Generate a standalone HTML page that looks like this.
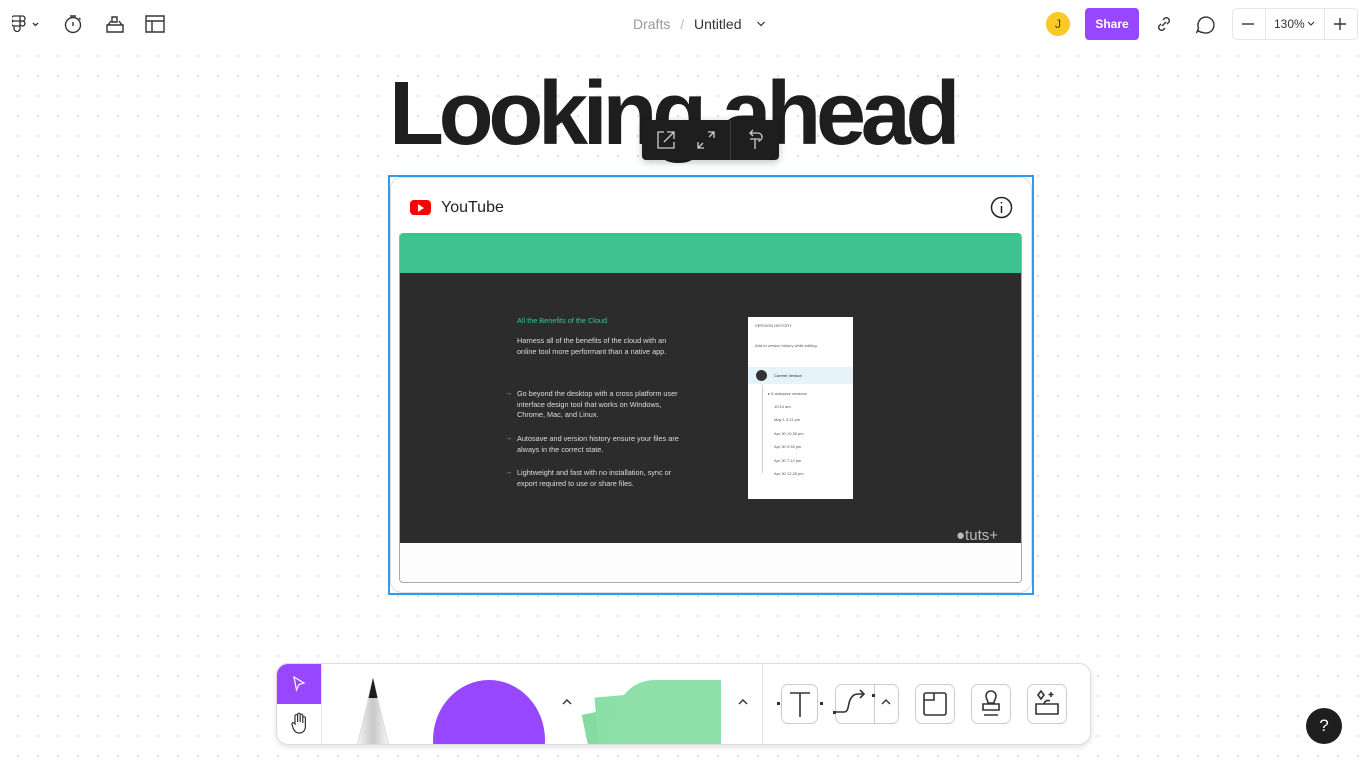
<!DOCTYPE html>
<html><head><meta charset="utf-8"><style>
*{margin:0;padding:0;box-sizing:border-box}
body{width:1366px;height:768px;overflow:hidden;position:relative;font-family:"Liberation Sans",sans-serif;background:#fff;
background-image:radial-gradient(circle,#dadada 0.9px,transparent 1.2px);background-size:20px 20px;background-position:8px 6px}
.top{position:absolute;left:0;top:0;width:1366px;height:48px;background:#fff}
.abs{position:absolute}
svg{display:block}
</style></head><body>
<div class="top"></div>
<svg class="abs" style="left:12px;top:15px" width="30" height="18" viewBox="0 0 30 18" fill="none" stroke="#333" stroke-width="1.3">
<path d="M2 1h6v5H2a2.5 2.5 0 010-5zM8 1h2.5a2.5 2.5 0 010 5H8zM2 6h6v5H2a2.5 2.5 0 010-5zM8 8.5a2.5 2.5 0 105 0a2.5 2.5 0 10-5 0zM2 11h6v2.5a2.5 2.5 0 11-6-0z"/>
<path d="M21 8l2.5 2.5L26 8"/></svg>
<svg class="abs" style="left:63px;top:14px" width="20" height="20" viewBox="0 0 20 20" fill="none" stroke="#333" stroke-width="1.4"><circle cx="10" cy="11" r="7.5"/><path d="M7 2h6M10 8v4M16 4l1.5 1.5"/></svg>
<svg class="abs" style="left:105px;top:14px" width="20" height="20" viewBox="0 0 20 20" fill="none" stroke="#333" stroke-width="1.4"><path d="M7 3h5v5H7zM3 11l3-4M17 11l-3-4M2 11h16v7H2z"/></svg>
<svg class="abs" style="left:145px;top:15px" width="20" height="18" viewBox="0 0 20 18" fill="none" stroke="#333" stroke-width="1.4"><path d="M1 1h18v16H1zM1 6h18M7 6v11"/></svg>
<div class="abs" style="left:633px;top:16px;font-size:14px;color:#999">Drafts <span style="margin:0 6px;color:#bbb">/</span> <span style="color:#333">Untitled</span></div>
<svg class="abs" style="left:756px;top:20px" width="10" height="8" viewBox="0 0 10 8" fill="none" stroke="#333" stroke-width="1.2"><path d="M1.5 2l3.5 3.5L8.5 2"/></svg>
<div class="abs" style="left:1046px;top:12px;width:24px;height:24px;border-radius:50%;background:#fbc926;font-size:12px;text-align:center;line-height:24px;color:#333">J</div>
<div class="abs" style="left:1085px;top:8px;width:54px;height:32px;border-radius:4px;background:#9747ff;color:#fff;font-size:12px;font-weight:bold;text-align:center;line-height:32px">Share</div>
<svg class="abs" style="left:1154px;top:14px" width="20" height="20" viewBox="0 0 20 20" fill="none" stroke="#333" stroke-width="1.4"><path d="M8 12l4-4M9 6l2-2a3 3 0 014 4l-2 2M11 14l-2 2a3 3 0 01-4-4l2-2"/></svg>
<svg class="abs" style="left:1193px;top:13px" width="22" height="22" viewBox="0 0 22 22" fill="none" stroke="#333" stroke-width="1.4"><path d="M4 19l1.5-4A8 8 0 1110 19.5c-2 0-3-.5-4.5-1.5z"/></svg>
<div class="abs" style="left:1232px;top:8px;width:126px;height:32px;border:1px solid #e6e6e6;border-radius:5px"></div>
<div class="abs" style="left:1265px;top:8px;width:1px;height:32px;background:#e6e6e6"></div>
<div class="abs" style="left:1324px;top:8px;width:1px;height:32px;background:#e6e6e6"></div>
<svg class="abs" style="left:1241px;top:17px" width="14" height="14" viewBox="0 0 14 14" stroke="#333" stroke-width="1.4"><path d="M1 7h12"/></svg>
<div class="abs" style="left:1274px;top:17px;font-size:12px;color:#333">130%</div>
<svg class="abs" style="left:1307px;top:21px" width="8" height="6" viewBox="0 0 8 6" fill="none" stroke="#333" stroke-width="1.1"><path d="M1 1l3 3 3-3"/></svg>
<svg class="abs" style="left:1333px;top:17px" width="14" height="14" viewBox="0 0 14 14" stroke="#333" stroke-width="1.4"><path d="M1 7h12M7 1v12"/></svg>
<div class="abs" style="left:389px;top:64px;font-size:90px;font-weight:bold;letter-spacing:-5.3px;color:#1e1e1e;line-height:100px;white-space:nowrap">Looking ahead</div>
<div class="abs" style="left:642px;top:120px;width:137px;height:40px;background:#1e1e1e;border-radius:4px;box-shadow:0 2px 8px rgba(0,0,0,.25)"></div>
<div class="abs" style="left:730px;top:120px;width:1px;height:40px;background:#3a3a3a"></div>
<svg class="abs" style="left:656px;top:130px" width="20" height="20" viewBox="0 0 20 20" fill="none" stroke="#ccc" stroke-width="1.3"><path d="M8 2H2v16h16v-6M11 2h7v7M18 2l-10 10"/></svg>
<svg class="abs" style="left:696px;top:130px" width="20" height="20" viewBox="0 0 20 20" fill="none" stroke="#ccc" stroke-width="1.3"><path d="M12 2h6v6M18 2l-5 5M8 18H2v-6M2 18l5-5"/></svg>
<svg class="abs" style="left:746px;top:128px" width="20" height="22" viewBox="0 0 20 22" fill="none" stroke="#ccc" stroke-width="1.3"><path d="M4 11h10M9 11v10M7 2L4 5l3 3M4 5h8a4 4 0 010 8"/></svg>
<div class="abs" style="left:388px;top:175px;width:646px;height:420px;border:2px solid #2d9bf0"></div>
<div class="abs" style="left:390px;top:177px;width:642px;height:416px;background:#fff;border:1px solid #ddd;border-radius:12px"></div>
<div class="abs" style="left:410px;top:200px;width:21px;height:15px;background:#f00;border-radius:4px"></div>
<svg class="abs" style="left:417px;top:204px" width="8" height="8" viewBox="0 0 8 8"><path d="M1 0l6 4-6 4z" fill="#fff"/></svg>
<div class="abs" style="left:441px;top:199px;font-size:16px;color:#222">YouTube</div>
<svg class="abs" style="left:990px;top:196px" width="23" height="23" viewBox="0 0 23 23" fill="none" stroke="#222" stroke-width="1.5"><circle cx="11.5" cy="11.5" r="10"/><path d="M11.5 10v7M11.5 6v1.5"/></svg>
<div class="abs" style="left:399px;top:233px;width:623px;height:350px;border-radius:4px;overflow:hidden;background:#fdfdfd;border:1px solid #aaa;border-top:none">
 <div style="height:40px;background:#3ec28f"></div>
 <div style="height:270px;background:#2c2c2c;position:relative;color:#ddd;font-size:7.3px;line-height:10.5px">
  <div style="position:absolute;left:117px;top:43px;color:#3ec28f">All the Benefits of the Cloud</div>
  <div style="position:absolute;left:117px;top:63px;width:160px">Harness all of the benefits of the cloud with an online tool more performant than a native app.</div>
  <div style="position:absolute;left:105px;top:115px;color:#3ec28f">→</div>
  <div style="position:absolute;left:117px;top:116px;width:165px">Go beyond the desktop with a cross platform user interface design tool that works on Windows, Chrome, Mac, and Linux.</div>
  <div style="position:absolute;left:105px;top:160px;color:#3ec28f">→</div>
  <div style="position:absolute;left:117px;top:161px;width:165px">Autosave and version history ensure your files are always in the correct state.</div>
  <div style="position:absolute;left:105px;top:194px;color:#3ec28f">→</div>
  <div style="position:absolute;left:117px;top:195px;width:165px">Lightweight and fast with no installation, sync or export required to use or share files.</div>
  <div style="position:absolute;left:348px;top:44px;width:105px;height:182px;background:#fff;color:#555;font-size:4px;line-height:6px">
   <div style="position:absolute;left:7px;top:6px">VERSION HISTORY</div>
   <div style="position:absolute;left:7px;top:26px">Add to version history while editing.</div>
   <div style="position:absolute;left:0;top:50px;width:105px;height:17px;background:#e6f3fb"></div>
   <div style="position:absolute;left:8px;top:53px;width:11px;height:11px;border-radius:50%;background:#333"></div>
   <div style="position:absolute;left:26px;top:56px;color:#222">Current Version</div>
   <div style="position:absolute;left:14px;top:68px;width:1px;height:88px;background:#ccc"></div>
   <div style="position:absolute;left:20px;top:74px">▸ 6 autosave versions</div>
   <div style="position:absolute;left:26px;top:87px">10:14 am</div>
   <div style="position:absolute;left:26px;top:100px">May 1 3:11 pm</div>
   <div style="position:absolute;left:26px;top:114px">Apr 30 10:38 pm</div>
   <div style="position:absolute;left:26px;top:127px">Apr 30 9:35 pm</div>
   <div style="position:absolute;left:26px;top:141px">Apr 30 7:12 pm</div>
   <div style="position:absolute;left:26px;top:154px">Apr 30 12:28 pm</div>
  </div>
  <div style="position:absolute;left:556px;top:258px;color:#bbb;font-size:15px">●tuts+</div>
 </div>
</div>
<div class="abs" style="left:276px;top:663px;width:815px;height:82px;background:#fff;border:1px solid #ddd;border-radius:12px;box-shadow:0 2px 6px rgba(0,0,0,.12);overflow:hidden">
 <div style="position:absolute;left:0;top:0;width:44px;height:40px;background:#9747ff"></div>
 <div style="position:absolute;left:44px;top:0;width:1px;height:82px;background:#e6e6e6"></div>
 <div style="position:absolute;left:485px;top:0;width:1px;height:82px;background:#e6e6e6"></div>
 <svg style="position:absolute;left:15px;top:12px" width="14" height="16" viewBox="0 0 14 16" fill="none" stroke="#fff" stroke-width="1.2"><path d="M2 1l10 6-5 1.5L4.5 14z"/></svg>
 <svg style="position:absolute;left:13px;top:48px" width="18" height="22" viewBox="0 0 18 22" fill="none" stroke="#333" stroke-width="1.2"><path d="M5 12V4a1.3 1.3 0 012.6 0v6V2.5a1.3 1.3 0 012.6 0V10V3.5a1.3 1.3 0 012.6 0V11V6a1.3 1.3 0 012.6 0v8c0 4-2 7-6 7-3 0-4-1-6-4L2 12.5a1.3 1.3 0 012-1.5z"/></svg>
 <svg style="position:absolute;left:74px;top:14px" width="44" height="68" viewBox="0 0 44 68"><defs><linearGradient id="pg" x1="0" x2="1"><stop offset="0" stop-color="#f4f4f4"/><stop offset=".5" stop-color="#c8c8c8"/><stop offset="1" stop-color="#f7f7f7"/></linearGradient></defs><path d="M18 18L22 0l4 18 12 50H6z" fill="url(#pg)" stroke="#ddd"/><path d="M22 0l-4.5 20h9z" fill="#1e1e1e"/></svg>
 <div style="position:absolute;left:156px;top:16px;width:112px;height:120px;border-radius:50%;background:#9747ff"></div>
 <svg style="position:absolute;left:284px;top:34px" width="12" height="8" viewBox="0 0 12 8" fill="none" stroke="#333" stroke-width="1.4"><path d="M2 6l4-4 4 4"/></svg>
 <div style="position:absolute;left:310px;top:42px;width:80px;height:60px;background:#86dca0;transform:rotate(-12deg)"></div>
 <div style="position:absolute;left:320px;top:30px;width:80px;height:60px;background:#8ae0a6;transform:rotate(-5deg)"></div>
 <div style="position:absolute;left:338px;top:16px;width:106px;height:70px;background:#8ee0a8;border-top-left-radius:40px"></div>
 <svg style="position:absolute;left:460px;top:34px" width="12" height="8" viewBox="0 0 12 8" fill="none" stroke="#333" stroke-width="1.4"><path d="M2 6l4-4 4 4"/></svg>
 <div style="position:absolute;left:504px;top:20px;width:37px;height:40px;border:1px solid #ccc;border-radius:7px"></div>
 <svg style="position:absolute;left:499px;top:24px" width="48" height="32" viewBox="0 0 48 32" fill="none" stroke="#333" stroke-width="1.6"><path d="M14 5h20M24 5v24"/><rect x="1" y="14" width="3" height="3" fill="#333" stroke="none"/><rect x="44" y="14" width="3" height="3" fill="#333" stroke="none"/></svg>
 <div style="position:absolute;left:558px;top:20px;width:64px;height:40px;border:1px solid #ccc;border-radius:7px"></div>
 <div style="position:absolute;left:597px;top:20px;width:1px;height:40px;background:#ccc"></div>
 <svg style="position:absolute;left:555px;top:24px" width="45" height="32" viewBox="0 0 45 32" fill="none" stroke="#333" stroke-width="1.6"><path d="M4 24h8c5 0 4-8 6-12s4-6 8-6h6M28 2l4 4-4 4"/><rect x="1" y="23" width="3" height="3" fill="#333" stroke="none"/><rect x="40" y="6" width="3" height="3" fill="#333" stroke="none"/></svg>
 <svg style="position:absolute;left:603px;top:34px" width="12" height="8" viewBox="0 0 12 8" fill="none" stroke="#333" stroke-width="1.4"><path d="M2 6l4-4 4 4"/></svg>
 <div style="position:absolute;left:638px;top:20px;width:40px;height:40px;border:1px solid #ccc;border-radius:7px"></div>
 <svg style="position:absolute;left:643px;top:25px" width="30" height="30" viewBox="0 0 30 30" fill="none" stroke="#333" stroke-width="1.6"><rect x="4" y="4" width="22" height="22" rx="2"/><path d="M4 11h10V4"/></svg>
 <div style="position:absolute;left:694px;top:20px;width:40px;height:40px;border:1px solid #ccc;border-radius:7px"></div>
 <svg style="position:absolute;left:699px;top:25px" width="30" height="30" viewBox="0 0 30 30" fill="none" stroke="#333" stroke-width="1.6"><path d="M12 14c0-3-2-4-2-7a5 5 0 0110 0c0 3-2 4-2 7zM7 15h16v6H7zM8 26h14"/></svg>
 <div style="position:absolute;left:750px;top:20px;width:40px;height:40px;border:1px solid #ccc;border-radius:7px"></div>
 <svg style="position:absolute;left:755px;top:25px" width="30" height="30" viewBox="0 0 30 30" fill="none" stroke="#333" stroke-width="1.6"><path d="M4 15h22v10H4zM12 15a4 4 0 016-3M9 2l3 4-3 4-3-4zM19 3v5M16.5 5.5h5"/></svg>
</div>
<div class="abs" style="left:1306px;top:708px;width:36px;height:36px;border-radius:50%;background:#1e1e1e;color:#fff;font-size:17px;text-align:center;line-height:36px">?</div>
</body></html>
